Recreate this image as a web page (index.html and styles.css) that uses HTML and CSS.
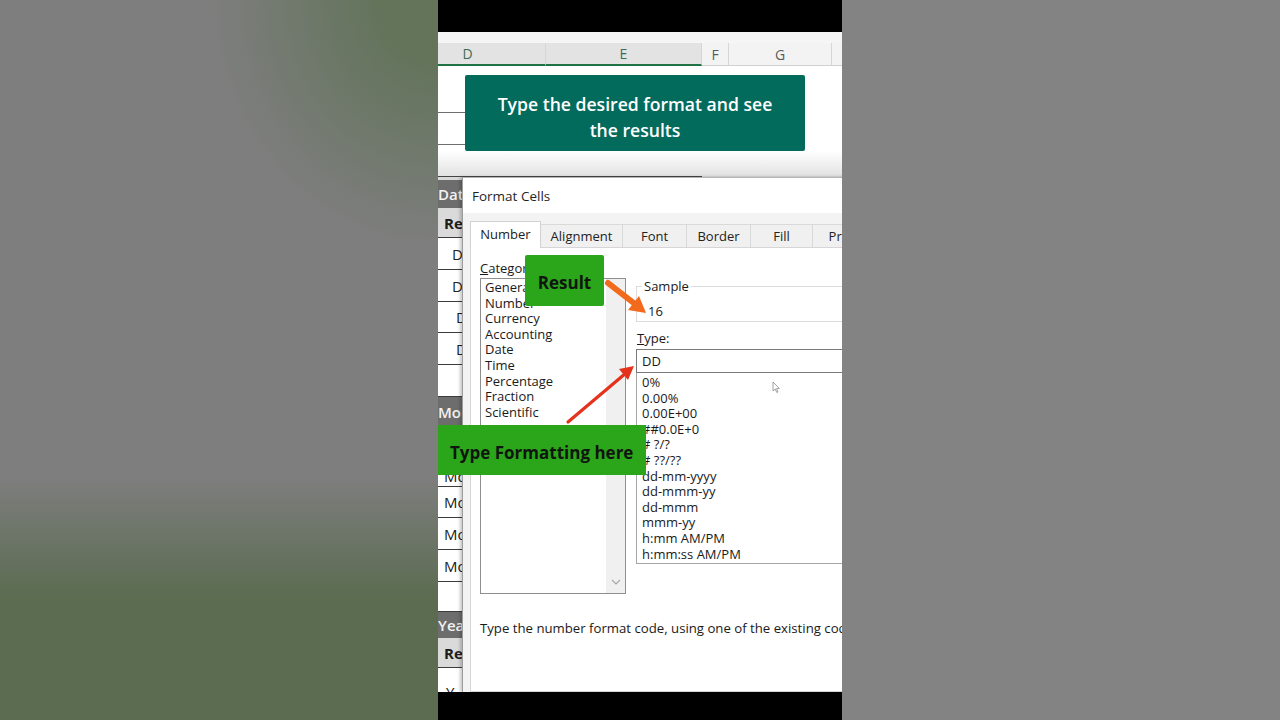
FILE: index.html
```html
<!DOCTYPE html>
<html lang="en">
<head>
<meta charset="utf-8">
<title>Format Cells – custom number format</title>
<link rel="stylesheet" href="styles.css">
</head>
<body>
<div class="screen">
  <div class="side side-left"></div>

  <div class="video">
    <div class="bar"></div>

    <div class="frame">
      <div class="sheet">
        <div class="col-header">
          <div class="ch ch-d sel">D</div>
          <div class="ch ch-e sel">E</div>
          <div class="ch ch-f">F</div>
          <div class="ch ch-g">G</div>
          <div class="ch ch-h"></div>
        </div>
        <div class="upper">
          <div class="urow r1"></div>
          <div class="urow r2"></div>
          <div class="ushade"></div>
          <div class="udiv"></div>
        </div>
        <div class="strip">
          <div class="cell gap"></div>
          <div class="cell dark c28">Date</div>
          <div class="cell head c30 p6">Result</div>
          <div class="cell c32 p14">DD</div>
          <div class="cell c32 p14">DD</div>
          <div class="cell c31 p18">DD</div>
          <div class="cell c32 p18">DD</div>
          <div class="cell c32"></div>
          <div class="cell dark c30">Month</div>
          <div class="cell c29"></div>
          <div class="cell c31 p6 low">Month</div>
          <div class="cell c31 p6">Month</div>
          <div class="cell c32 p6">Month</div>
          <div class="cell c32 p6">Month</div>
          <div class="cell c30"></div>
          <div class="cell dark c26">Year</div>
          <div class="cell head c30 p6">Result</div>
          <div class="cell c24 p8 cut">Y</div>
        </div>
      </div>

      <div class="callout-teal">Type the desired format and see<br>the results</div>

      <div class="dialog">
        <div class="dlg-title">Format Cells</div>
        <div class="dlg-body">
          <div class="tabs">
            <div class="tab active w71">Number</div>
            <div class="tab w83">Alignment</div>
            <div class="tab w65">Font</div>
            <div class="tab w65">Border</div>
            <div class="tab w63">Fill</div>
            <div class="tab w96">Protection</div>
          </div>
          <div class="tabpage">
            <div class="pg-row">
              <div class="pg-left">
                <div class="lbl"><span class="ul">C</span>ategory:</div>
                <div class="listbox">
                  <div class="items">
                    <div>General</div>
                    <div>Number</div>
                    <div>Currency</div>
                    <div>Accounting</div>
                    <div>Date</div>
                    <div>Time</div>
                    <div>Percentage</div>
                    <div>Fraction</div>
                    <div>Scientific</div>
                  </div>
                  <div class="vscroll">
                    <svg class="chev" width="10" height="6" viewBox="0 0 10 6"><path d="M1 1 L5 5 L9 1" fill="none" stroke="#a8a8a8" stroke-width="1.2"/></svg>
                  </div>
                </div>
              </div>
              <div class="pg-right">
                <fieldset class="sample">
                  <legend>Sample</legend>
                  <div class="sample-val">16</div>
                </fieldset>
                <div class="lbl type-lbl"><span class="ul">T</span>ype:</div>
                <div class="type-input">DD</div>
                <div class="type-list">
                  <div>0%</div>
                  <div>0.00%</div>
                  <div>0.00E+00</div>
                  <div>##0.0E+0</div>
                  <div># ?/?</div>
                  <div># ??/??</div>
                  <div>dd-mm-yyyy</div>
                  <div>dd-mmm-yy</div>
                  <div>dd-mmm</div>
                  <div>mmm-yy</div>
                  <div>h:mm AM/PM</div>
                  <div>h:mm:ss AM/PM</div>
                </div>
              </div>
            </div>
            <div class="desc">Type the number format code, using one of the existing codes as a starting point.</div>
          </div>
        </div>
      </div>

      <div class="tag tag-result">Result</div>
      <div class="tag tag-type">Type Formatting here</div>

      <svg class="overlay" width="404" height="660" viewBox="0 0 404 660">
        <line x1="170" y1="251" x2="197" y2="272" stroke="#f26a1b" stroke-width="6" stroke-linecap="round"/>
        <polygon points="208,281 190,278 201,264" fill="#f26a1b"/>
        <line x1="130" y1="390" x2="188" y2="341" stroke="#e4321d" stroke-width="3.2" stroke-linecap="round"/>
        <polygon points="196,334 190,348 181,337" fill="#e4321d"/>
        <path d="M335 350 L335 359 L337.2 357 L338.8 360.5 L340 360 L338.5 356.6 L341.3 356.5 Z" fill="#fff" stroke="#8a8a8a" stroke-width="0.8"/>
      </svg>
    </div>

    <div class="bar bar-bottom"></div>
  </div>

  <div class="side side-right"></div>
</div>
</body>
</html>
```

FILE: styles.css
```css
* { box-sizing: border-box; }

html, body {
  margin: 0;
  padding: 0;
  width: 1280px;
  height: 720px;
  overflow: hidden;
  font-family: "Open Sans", "Noto Sans", "Liberation Sans", sans-serif;
}

.screen {
  display: flex;
  width: 1280px;
  height: 720px;
}

.side {
  width: 438px;
  flex: none;
}

.side-left {
  background:
    radial-gradient(ellipse 230px 250px at 100% 0%, rgba(99, 116, 91, 1) 25%, rgba(99, 116, 91, 0) 100%),
    linear-gradient(to bottom, rgba(91, 108, 81, 0) 66%, rgba(91, 108, 81, 1) 83%),
    #7e7e7e;
}

.side-right {
  background: #838383;
}

.video {
  width: 404px;
  flex: none;
  display: flex;
  flex-direction: column;
}

.bar {
  height: 32px;
  background: #000;
  flex: none;
}

.bar-bottom {
  height: 28px;
}

.frame {
  position: relative;
  height: 660px;
  overflow: hidden;
  background: #fff;
}

/* ---------- spreadsheet ---------- */
.sheet {
  display: flex;
  flex-direction: column;
}

.col-header {
  display: flex;
  height: 34px;
  padding-top: 11px;
  background: #f5f5f5;
}

.ch {
  height: 23px;
  flex: none;
  display: flex;
  align-items: center;
  justify-content: center;
  font-size: 14px;
  color: #5a5a5a;
  background: #f3f3f3;
  border-right: 1px solid #d6d6d6;
  border-bottom: 1px solid #d0d0d0;
}

.ch.sel {
  background: #e3e3e3;
  color: #3f6b55;
  border-bottom: 2px solid #217346;
}

.ch-d { width: 156px; margin-left: -48px; }
.ch-e { width: 156px; }
.ch-f { width: 27px; }
.ch-g { width: 103px; }
.ch-h { width: 40px; }

.upper {
  display: flex;
  flex-direction: column;
  height: 111px;
}

.urow {
  width: 108px;
  border-bottom: 1px solid #6e6e6e;
}

.r1 { height: 47px; }
.r2 { height: 32px; }

.ushade {
  height: 31px;
  background: linear-gradient(to bottom, #ffffff 20%, #e2e2e2 100%);
}

.udiv {
  height: 1px;
  background: linear-gradient(to right, #444 264px, #dadada 264px);
}

.strip {
  display: flex;
  flex-direction: column;
  width: 70px;
}

.cell {
  display: flex;
  align-items: center;
  white-space: nowrap;
  overflow: hidden;
  font-size: 15px;
  color: #222;
  background: #fff;
  border-bottom: 1px solid #3c3c3c;
}

.cell.gap { height: 3px; background: #d8d8d8; border-bottom: none; }
.cell.dark {
  background: #6d6d6d;
  color: #f2f2f2;
  font-weight: 600;
  border-bottom: none;
}
.cell.head {
  background: #dadada;
  font-weight: 700;
  color: #1b1b1b;
}
.cell.cut {
  align-items: flex-start;
  padding-top: 14px;
}
.cell.low {
  align-items: flex-end;
  padding-bottom: 0;
}

.c24 { height: 24px; border-bottom: none; }
.c26 { height: 26px; }
.c28 { height: 28px; }
.c29 { height: 29px; }
.c30 { height: 30px; }
.c31 { height: 31px; }
.c32 { height: 32px; }
.p6 { padding-left: 6px; }
.p8 { padding-left: 8px; }
.p14 { padding-left: 14px; }
.p18 { padding-left: 18px; }

/* ---------- callouts ---------- */
.callout-teal {
  position: absolute;
  left: 27px;
  top: 43px;
  width: 340px;
  height: 76px;
  padding-top: 16px;
  background: #036b5c;
  border-radius: 2px;
  color: #fff;
  font-weight: 600;
  font-size: 17.6px;
  line-height: 26px;
  text-align: center;
}

.tag {
  position: absolute;
  background: #2ba519;
  color: #101510;
  font-weight: 700;
  font-size: 17px;
  display: flex;
  align-items: center;
  padding-top: 4px;
}

.tag-result {
  left: 87px;
  top: 223px;
  width: 79px;
  height: 51px;
  justify-content: center;
  border-radius: 2px;
}

.tag-type {
  left: 0;
  top: 393px;
  width: 208px;
  height: 50px;
  padding-left: 12px;
}

.overlay {
  position: absolute;
  left: 0;
  top: 0;
  pointer-events: none;
}

/* ---------- dialog ---------- */
.dialog {
  position: absolute;
  left: 24px;
  top: 145px;
  width: 460px;
  bottom: 0;
  display: flex;
  flex-direction: column;
  background: #f3f3f3;
  border-left: 1px solid #9c9c9c;
  border-top: 1px solid #b5b5b5;
  box-shadow: -2px 0 3px rgba(0, 0, 0, 0.22);
  color: #1a1a1a;
  font-size: 13px;
}

.dlg-title {
  height: 35px;
  flex: none;
  display: flex;
  align-items: center;
  padding-left: 9px;
  background: #fff;
  font-size: 13.5px;
  color: #1f1f1f;
}

.dlg-body {
  flex: 1;
  display: flex;
  flex-direction: column;
  padding: 8px 0 0 7px;
}

.tabs {
  display: flex;
  align-items: flex-end;
  height: 26px;
  flex: none;
}

.tab {
  height: 23px;
  flex: none;
  display: flex;
  align-items: center;
  justify-content: center;
  background: #f0f0f0;
  border: 1px solid #d9d9d9;
  border-bottom: none;
  margin-left: -1px;
  color: #222;
}

.tab.active {
  height: 27px;
  margin-left: 0;
  margin-bottom: -1px;
  background: #fff;
  border-color: #d2d2d2;
  position: relative;
  z-index: 1;
  padding-bottom: 2px;
}

.w63 { width: 63px; }
.w65 { width: 65px; }
.w71 { width: 71px; }
.w83 { width: 83px; }
.w96 { width: 96px; }

.tabpage {
  flex: 1;
  background: #fff;
  border: 1px solid #d6d6d6;
  border-right: none;
  padding: 11px 0 0 9px;
}

.pg-row {
  display: flex;
  gap: 10px;
}

.pg-left {
  width: 146px;
  flex: none;
}

.lbl {
  line-height: 18px;
  height: 18px;
  white-space: nowrap;
}

.ul { text-decoration: underline; }

.listbox {
  margin-top: 1px;
  height: 316px;
  border: 1px solid #8e8e8e;
  display: flex;
}

.items {
  flex: 1;
  padding: 1px 4px;
  line-height: 15.6px;
  white-space: nowrap;
  overflow: hidden;
}

.vscroll {
  width: 19px;
  flex: none;
  background: #f0f0f0;
  display: flex;
  flex-direction: column;
  justify-content: flex-end;
  align-items: center;
  padding-bottom: 8px;
}

.pg-right {
  flex: 1;
  min-width: 0;
}

.sample {
  margin: 20px 0 0;
  padding: 0 0 2px 5px;
  border: 1px solid #dcdcdc;
  min-width: 0;
}

.sample legend {
  padding: 0 2px;
  line-height: 14px;
}

.sample-val {
  margin-top: 10px;
  padding-left: 6px;
  line-height: 16px;
}

.type-lbl {
  margin-top: 8px;
  padding-left: 1px;
  line-height: 16px;
  height: 16px;
}

.type-input {
  margin-top: 3px;
  height: 24px;
  border: 1px solid #7a7a7a;
  padding-left: 5px;
  display: flex;
  align-items: center;
}

.type-list {
  height: 191px;
  border: 1px solid #a6a6a6;
  border-top: none;
  padding: 2px 5px;
  line-height: 15.6px;
  white-space: nowrap;
}

.desc {
  margin-top: 26px;
  line-height: 16px;
  font-size: 13.2px;
  white-space: nowrap;
}
```
